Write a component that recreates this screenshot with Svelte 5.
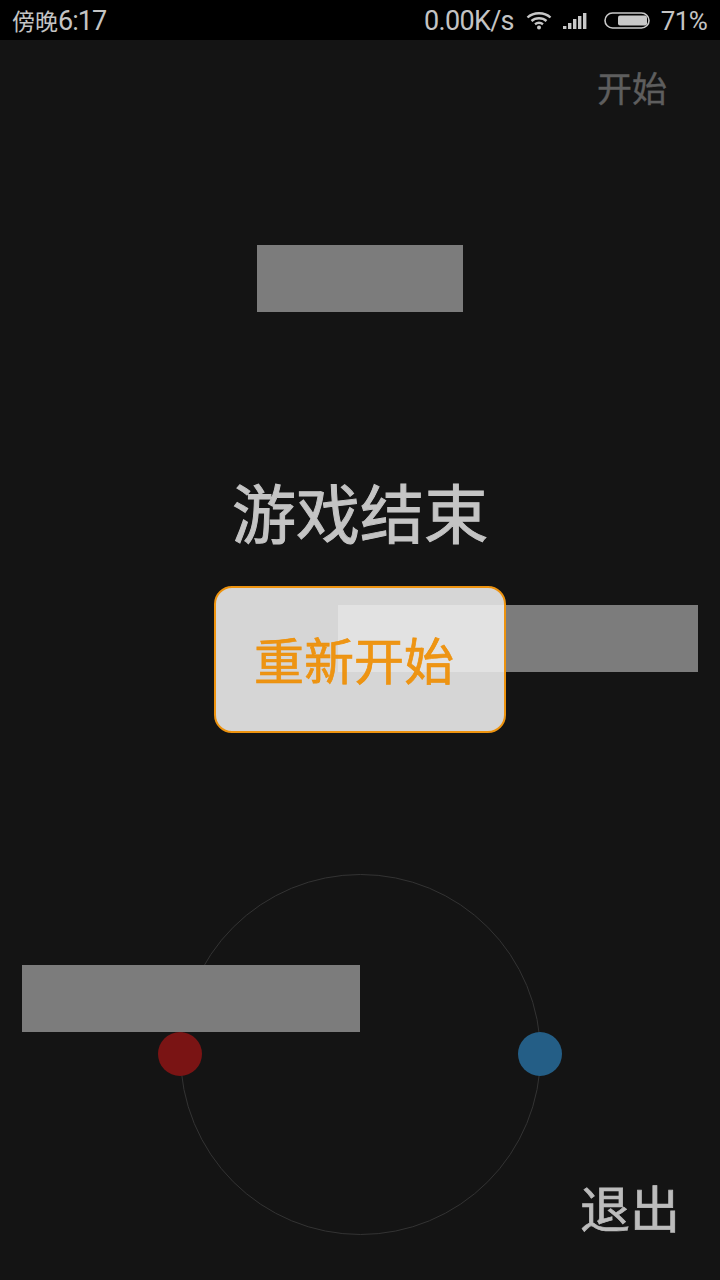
<script>
  const bars = [
    { x: 257, y: 205, w: 206 },
    { x: 338, y: 565, w: 360 },
    { x: 22, y: 925, w: 338 },
  ];
  const signal = [
    { x: 0, h: 3 },
    { x: 5, h: 6 },
    { x: 10, h: 10 },
    { x: 15, h: 13 },
    { x: 20, h: 16 },
  ];
</script>

<div class="page">
  <div class="statusbar">
    <span class="time"><span class="cjk">傍晚</span>6:17</span>
    <span class="spacer"></span>
    <span class="speed">0.00K/s</span>
    <svg class="wifi" width="26" height="20" viewBox="0 0 26 20">
      <path d="M1.5 7.5C7.5 1.8 18.5 1.8 24.5 7.5" />
      <path d="M5.5 11C9.5 7.4 16.5 7.4 20.5 11" />
      <path d="M9 14.3C11.3 12.6 14.7 12.6 17 14.3" />
      <circle cx="13" cy="17.5" r="2" />
    </svg>
    <svg class="signal" width="26" height="17" viewBox="0 0 26 17">
      {#each signal as s}
        <rect x={s.x + 1} y={17 - s.h} width="3.4" height={s.h} />
      {/each}
    </svg>
    <svg class="battery" width="46" height="17" viewBox="0 0 46 17">
      <rect class="shell" x="1" y="1" width="44" height="15" rx="7.5" />
      <rect class="level" x="14" y="3.5" width="29" height="10" rx="2" />
    </svg>
    <span class="percent">71%</span>
  </div>

  <div class="game">
    <div class="ring"></div>
    {#each bars as b}
      <div class="bar" style="left:{b.x}px;top:{b.y}px;width:{b.w}px"></div>
    {/each}
    <div class="dot red"></div>
    <div class="dot blue"></div>

    <div class="overlay">
      <div class="start">开始</div>
      <div class="title">游戏结束</div>
      <button class="restart">重新开始</button>
      <div class="exit">退出</div>
    </div>
  </div>
</div>

<style>
  :global(body) {
    margin: 0;
    background: #141414;
  }
  .page {
    width: 720px;
    height: 1280px;
    display: flex;
    flex-direction: column;
    overflow: hidden;
    font-family: "Liberation Sans", "Noto Sans CJK SC", sans-serif;
  }
  .statusbar {
    height: 40px;
    flex: none;
    background: #000;
    color: #c4c4c4;
    display: flex;
    align-items: center;
    padding: 0 13px 0 12px;
    font-family: Roboto, "Noto Sans CJK SC", sans-serif;
    font-size: 27px;
    letter-spacing: -0.7px;
    box-sizing: border-box;
  }
  .spacer {
    flex: 1;
  }
  .time {
    letter-spacing: -1px;
  }
  .cjk {
    font-size: 23px;
    letter-spacing: 0;
  }
  .speed {
    line-height: 40px;
    padding-top: 2px;
  }
  .percent {
    font-size: 26px;
    line-height: 40px;
    padding-top: 2px;
  }
  .wifi {
    margin-left: 12px;
    margin-bottom: 1px;
  }
  .wifi path {
    fill: none;
    stroke: #c8c8c8;
    stroke-width: 2.4;
  }
  .wifi circle {
    fill: #c8c8c8;
  }
  .signal {
    margin-left: 10px;
    margin-top: 1px;
  }
  .signal rect {
    fill: #c8c8c8;
  }
  .battery {
    margin-left: 16px;
  }
  .shell {
    fill: none;
    stroke: #c8c8c8;
    stroke-width: 1.6;
  }
  .level {
    fill: #c8c8c8;
  }
  .percent {
    margin-left: 11px;
  }
  .game {
    position: relative;
    flex: 1;
    background: #141414;
  }
  .ring {
    position: absolute;
    left: 179.5px;
    top: 833.5px;
    width: 361px;
    height: 361px;
    box-sizing: border-box;
    border: 1.5px solid #333;
    border-radius: 50%;
  }
  .bar {
    position: absolute;
    height: 67px;
    background: #7c7c7c;
  }
  .dot {
    position: absolute;
    top: 992px;
    width: 44px;
    height: 44px;
    border-radius: 50%;
  }
  .red {
    left: 158px;
    background: #7a1414;
  }
  .blue {
    left: 518px;
    background: #245e86;
  }
  .overlay {
    position: absolute;
    inset: 0;
    display: flex;
    flex-direction: column;
    align-items: center;
  }
  .start {
    align-self: flex-end;
    margin: 25px 53px 0 0;
    font-size: 35px;
    line-height: 50px;
    color: #5e5e5e;
    -webkit-text-stroke: 0.4px #5e5e5e;
  }
  .title {
    margin-top: 361px;
    font-size: 64px;
    line-height: 80px;
    color: #c4c4c4;
    -webkit-text-stroke: 1px #c4c4c4;
  }
  .restart {
    margin-top: 30px;
    width: 292px;
    height: 147px;
    box-sizing: border-box;
    border: 2px solid #ed930f;
    border-radius: 18px;
    background: rgba(239, 239, 239, 0.885);
    color: rgba(238, 144, 8, 0.95);
    font: inherit;
    font-size: 50px;
    padding: 0 12px 4px 0;
    -webkit-text-stroke: 0.7px rgba(238, 144, 8, 0.95);
  }
  .exit {
    align-self: flex-end;
    margin: 443px 40px 0 0;
    font-size: 50px;
    line-height: 70px;
    color: #bcbcbc;
    -webkit-text-stroke: 0.7px #bcbcbc;
  }
</style>
